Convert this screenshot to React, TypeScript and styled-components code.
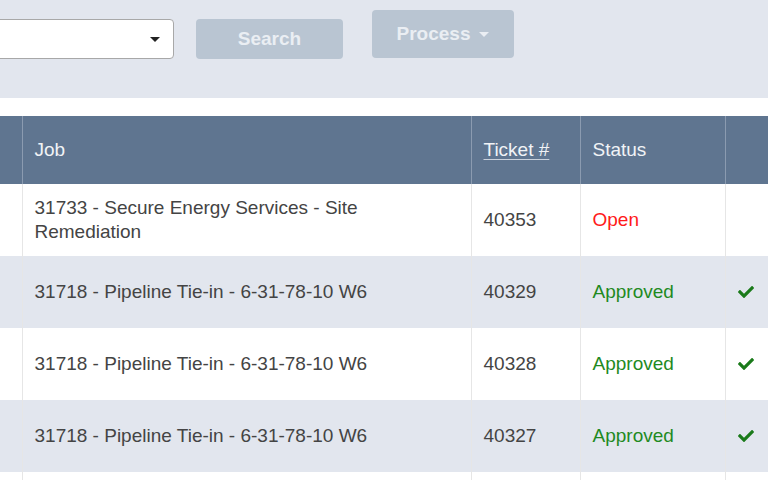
import React from "react";
import styled, { createGlobalStyle } from "styled-components";
import { FaCheck } from "react-icons/fa";

const GlobalStyle = createGlobalStyle`
  html, body {
    margin: 0;
    padding: 0;
    background: #ffffff;
    overflow: hidden;
    font-family: "Liberation Sans", Arial, sans-serif;
  }
`;

const Page = styled.div`
  width: 768px;
  height: 480px;
  overflow: hidden;
  background: #ffffff;
`;

const Toolbar = styled.div`
  display: flex;
  align-items: flex-start;
  height: 88px;
  padding-top: 10px;
  background: #e2e6ee;
`;

const Select = styled.div`
  display: flex;
  align-items: center;
  justify-content: flex-end;
  box-sizing: border-box;
  width: 204px;
  height: 40px;
  margin-top: 9px;
  margin-left: -30px;
  padding-right: 13px;
  background: #ffffff;
  border: 1px solid #a8a8a8;
  border-radius: 4px;
`;

const Caret = styled.span<{ $color: string; $size: number }>`
  display: inline-block;
  width: 0;
  height: 0;
  border-left: ${(p) => p.$size}px solid transparent;
  border-right: ${(p) => p.$size}px solid transparent;
  border-top: ${(p) => p.$size}px solid ${(p) => p.$color};
`;

const Button = styled.button<{ $width: number; $height: number; $offset: number; $gap: number }>`
  display: flex;
  align-items: center;
  justify-content: center;
  gap: 9px;
  box-sizing: border-box;
  width: ${(p) => p.$width}px;
  height: ${(p) => p.$height}px;
  margin-top: ${(p) => p.$offset}px;
  margin-left: ${(p) => p.$gap}px;
  padding: 0;
  border: none;
  border-radius: 4px;
  background: #b9c5d2;
  color: #eaeef3;
  font-family: "Liberation Sans", Arial, sans-serif;
  font-size: 19px;
  font-weight: bold;
`;

const Spacer = styled.div`
  height: 18px;
  background: #ffffff;
`;

const Table = styled.table`
  width: 800px;
  border-collapse: collapse;
  table-layout: fixed;
  font-size: 19px;
  color: #444444;
`;

const HeadCell = styled.th<{ $link?: boolean }>`
  height: 68px;
  box-sizing: border-box;
  padding: 0 12px;
  background: #5f7590;
  color: #f1f3f6;
  font-weight: normal;
  text-align: left;
  border-left: 1px solid #8b9bb0;
  text-decoration: ${(p) => (p.$link ? "underline" : "none")};
  text-decoration-color: #c9d1dc;
  text-underline-offset: 3px;

  &:first-child {
    border-left: none;
  }
`;

const Row = styled.tr<{ $striped: boolean }>`
  background: ${(p) => (p.$striped ? "#e2e6ee" : "#ffffff")};
`;

const Cell = styled.td`
  height: 72px;
  box-sizing: border-box;
  padding: 0 12px;
  line-height: 24px;
  vertical-align: middle;
  border-left: 1px solid #e6e6e6;

  &:first-child {
    border-left: none;
  }
`;

const Status = styled.span<{ $approved: boolean }>`
  color: ${(p) => (p.$approved ? "#1f8a1f" : "#ff1a1a")};
`;

const Check = styled(FaCheck)`
  display: block;
  color: #1a7a1a;
  font-size: 16px;
`;

const rows = [
  { job: "31733 - Secure Energy Services - Site Remediation", ticket: "40353", approved: false },
  { job: "31718 - Pipeline Tie-in - 6-31-78-10 W6", ticket: "40329", approved: true },
  { job: "31718 - Pipeline Tie-in - 6-31-78-10 W6", ticket: "40328", approved: true },
  { job: "31718 - Pipeline Tie-in - 6-31-78-10 W6", ticket: "40327", approved: true },
];

export default function App() {
  return (
    <Page>
      <GlobalStyle />
      <Toolbar>
        <Select>
          <Caret $color="#222222" $size={5} />
        </Select>
        <Button $width={147} $height={40} $offset={9} $gap={22}>
          Search
        </Button>
        <Button $width={142} $height={48} $offset={0} $gap={29}>
          Process
          <Caret $color="#eaeef3" $size={5} />
        </Button>
      </Toolbar>
      <Spacer />
      <Table>
        <colgroup>
          <col style={{ width: 22 }} />
          <col style={{ width: 449 }} />
          <col style={{ width: 109 }} />
          <col style={{ width: 145 }} />
          <col style={{ width: 75 }} />
        </colgroup>
        <thead>
          <tr>
            <HeadCell />
            <HeadCell>Job</HeadCell>
            <HeadCell $link>Ticket #</HeadCell>
            <HeadCell>Status</HeadCell>
            <HeadCell />
          </tr>
        </thead>
        <tbody>
          {rows.map((r, i) => (
            <Row key={r.ticket} $striped={i % 2 === 1}>
              <Cell />
              <Cell>{r.job}</Cell>
              <Cell>{r.ticket}</Cell>
              <Cell>
                <Status $approved={r.approved}>{r.approved ? "Approved" : "Open"}</Status>
              </Cell>
              <Cell>{r.approved && <Check />}</Cell>
            </Row>
          ))}
          <Row $striped={false}>
            <Cell />
            <Cell />
            <Cell />
            <Cell />
            <Cell />
          </Row>
        </tbody>
      </Table>
    </Page>
  );
}
